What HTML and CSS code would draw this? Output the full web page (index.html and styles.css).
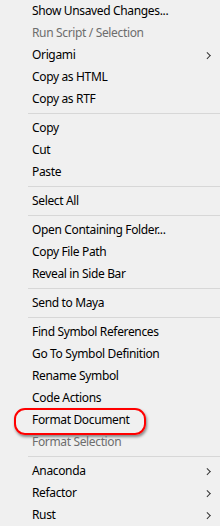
FILE: index.html
```html
<!DOCTYPE html>
<html>
<head>
<meta charset="utf-8">
<link rel="stylesheet" href="styles.css">
</head>
<body>
<div class="menu">
  <div class="item">Show Unsaved Changes...</div>
  <div class="item disabled">Run Script / Selection</div>
  <div class="item sub">Origami<span class="chev"></span></div>
  <div class="item">Copy as HTML</div>
  <div class="item">Copy as RTF</div>
  <div class="sep"></div>
  <div class="item">Copy</div>
  <div class="item">Cut</div>
  <div class="item">Paste</div>
  <div class="sep"></div>
  <div class="item">Select All</div>
  <div class="sep"></div>
  <div class="item">Open Containing Folder...</div>
  <div class="item">Copy File Path</div>
  <div class="item">Reveal in Side Bar</div>
  <div class="sep"></div>
  <div class="item">Send to Maya</div>
  <div class="sep"></div>
  <div class="item">Find Symbol References</div>
  <div class="item">Go To Symbol Definition</div>
  <div class="item">Rename Symbol</div>
  <div class="item">Code Actions</div>
  <div class="item highlight">Format Document<span class="ring"></span></div>
  <div class="item disabled">Format Selection</div>
  <div class="sep"></div>
  <div class="item sub">Anaconda<span class="chev"></span></div>
  <div class="item sub">Refactor<span class="chev"></span></div>
  <div class="item sub">Rust<span class="chev"></span></div>
</div>
</body>
</html>
```
FILE: styles.css
```css
html, body {
  margin: 0;
  padding: 0;
  background: #f0f0f0;
}
.menu {
  width: 220px;
  height: 526px;
  background: #f0f0f0;
  font-family: "Noto Sans", "Open Sans", sans-serif;
  font-size: 12px;
  letter-spacing: -0.35px;
  color: #000;
  display: flex;
  flex-direction: column;
}
.item {
  position: relative;
  height: 22px;
  line-height: 22px;
  padding-left: 32px;
  white-space: nowrap;
}
.item.disabled {
  color: #6d6d6d;
}
.sep {
  height: 7px;
  display: flex;
  align-items: center;
  padding-left: 28px;
}
.sep::before {
  content: "";
  display: block;
  flex: 1;
  height: 1px;
  background: #d7d7d7;
}
.chev {
  position: absolute;
  right: 11px;
  top: 8.5px;
  width: 3.5px;
  height: 3.5px;
  border-right: 1.3px solid #333;
  border-top: 1.3px solid #333;
  transform: rotate(45deg);
}
.ring {
  position: absolute;
  left: 14px;
  top: -1px;
  width: 128px;
  height: 23px;
  border: 2px solid #f00;
  border-radius: 11px;
  box-shadow: 1px 2px 3px rgba(0,0,0,0.45);
  pointer-events: none;
}
```
